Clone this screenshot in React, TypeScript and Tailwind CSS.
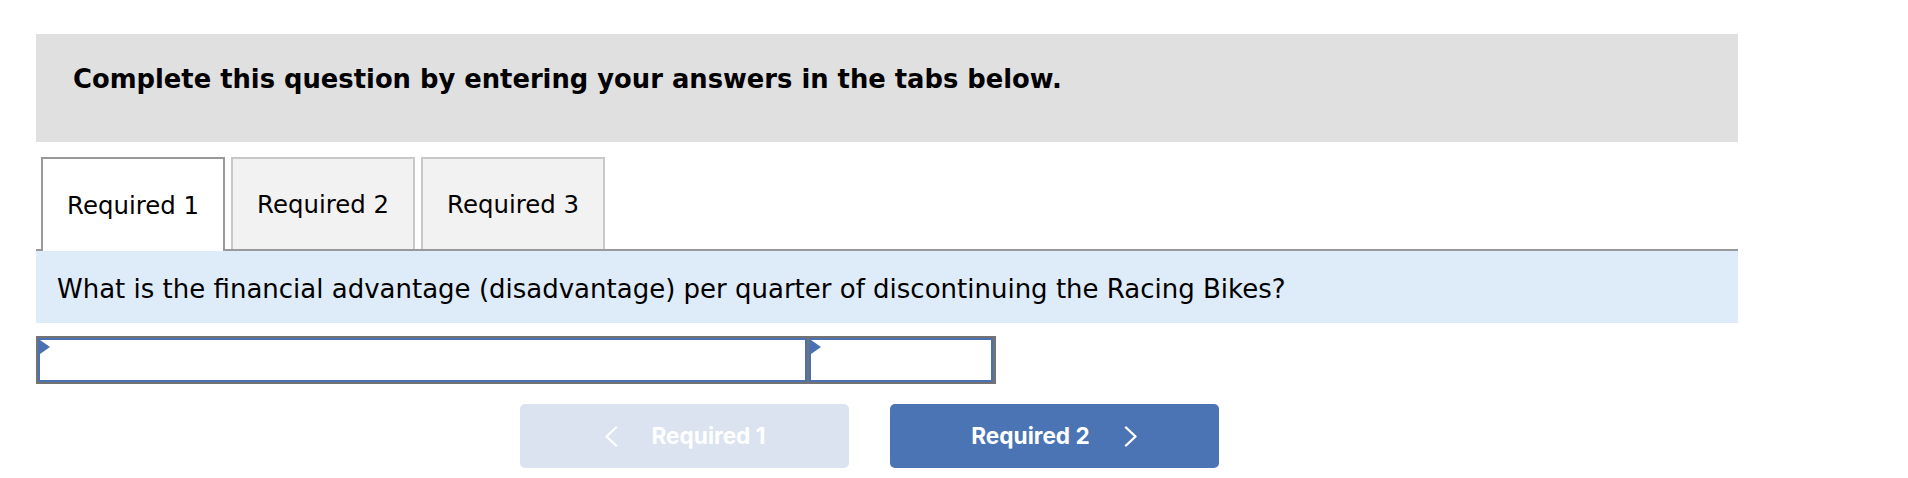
import React from 'react';

const tabs = ['Required 1', 'Required 2', 'Required 3'];

const Flag: React.FC = () => (
    <svg className="absolute left-0 top-0" width="10" height="14" viewBox="0 0 10 14">
        <polygon points="0,0 10,7 0,14" fill="#4a72b2" />
    </svg>
);

const ChevronLeft: React.FC = () => (
    <svg width="14" height="21" viewBox="0 0 14 21" fill="none">
        <polyline points="12,1.5 2.5,10.5 12,19.5" stroke="white" strokeWidth="2.4" strokeLinecap="round" strokeLinejoin="round" />
    </svg>
);

const ChevronRight: React.FC = () => (
    <svg width="14" height="21" viewBox="0 0 14 21" fill="none">
        <polyline points="2,1.5 11.5,10.5 2,19.5" stroke="white" strokeWidth="2.4" strokeLinecap="round" strokeLinejoin="round" />
    </svg>
);

const App: React.FC = () => {
    const active = 0;

    return (
        <div className="bg-white min-h-[478px] pt-[34px] pl-[36px] text-black" style={{ fontFamily: '"DejaVu Sans", Verdana, sans-serif' }}>
            <div className="w-[1702px]">
                <div className="bg-[#e0e0e0] h-[108px] pt-[29px] pl-[37px]">
                    <h2 className="text-[25.8px] leading-[32px] font-bold">
                        Complete this question by entering your answers in the tabs below.
                    </h2>
                </div>

                <div className="mt-[15px] flex gap-[6px] pl-[5px] border-b-2 border-[#999999]">
                    {tabs.map((tab, i) => (
                        <div
                            key={tab}
                            className={
                                i === active
                                    ? 'w-[184px] h-[94px] -mb-[2px] pt-[2px] flex items-center justify-center bg-white border-2 border-b-0 border-[#999999] text-[24.4px]'
                                    : 'w-[184px] h-[92px] pt-[2px] flex items-center justify-center bg-[#f2f2f2] border-2 border-b-0 border-[#c8c8c8] text-[24.4px]'
                            }
                        >
                            {tab}
                        </div>
                    ))}
                </div>

                <div className="bg-[#deebf8] h-[72px] pt-[22px] pl-[21px]">
                    <p className="text-[26px] leading-[32px]">
                        What is the financial advantage (disadvantage) per quarter of discontinuing the Racing Bikes?
                    </p>
                </div>

                <div className="mt-[13px] w-[960px] h-[48px] bg-[#737373] p-[2px] flex gap-[2px]">
                    <div className="relative w-[769px] h-[44px] bg-white border-2 border-[#4a72b2]">
                        <Flag />
                    </div>
                    <div className="relative w-[184px] h-[44px] bg-white border-2 border-[#4a72b2]">
                        <Flag />
                    </div>
                </div>

                <div className="mt-[20px] ml-[484px] flex gap-[41px]" style={{ fontFamily: 'Inter, "Liberation Sans", sans-serif' }}>
                    <button className="w-[329px] h-[64px] rounded-[5px] bg-[#dae3ef] text-white font-bold text-[22.6px] flex items-center justify-center gap-[34px]">
                        <ChevronLeft />
                        <span>Required 1</span>
                    </button>
                    <button className="w-[329px] h-[64px] rounded-[5px] bg-[#4a74b3] text-white font-bold text-[22.6px] flex items-center justify-center gap-[34px]">
                        <span>Required 2</span>
                        <ChevronRight />
                    </button>
                </div>
            </div>
        </div>
    );
};

export default App;
